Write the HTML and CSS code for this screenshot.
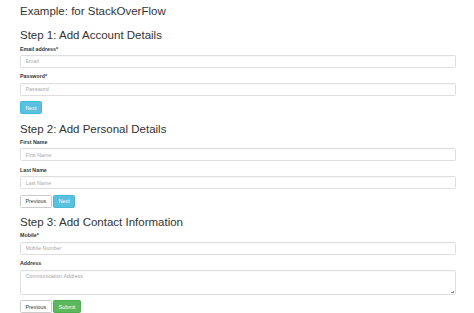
FILE: index.html
```html
<!DOCTYPE html>
<html lang="en">
<head>
  <meta charset="UTF-8">
  <title>Example: for StackOverFlow</title>
  <link rel="stylesheet" href="styles.css">
</head>
<body>
  <div class="container">
    <h2 class="title">Example: for StackOverFlow</h2>

    <!-- Passo 1 -->
    <form class="step">
      <h2>Step 1: Add Account Details</h2>
      <div class="form-group">
        <label>Email address*</label>
        <input type="email" class="form-control" placeholder="Email">
      </div>
      <div class="form-group">
        <label>Password*</label>
        <input type="password" class="form-control" placeholder="Password">
      </div>
      <div class="actions">
        <button type="button" class="btn btn-info">Next</button>
      </div>
    </form>

    <!-- Passo 2 -->
    <form class="step">
      <h2>Step 2: Add Personal Details</h2>
      <div class="form-group">
        <label>First Name</label>
        <input type="text" class="form-control" placeholder="First Name">
      </div>
      <div class="form-group">
        <label>Last Name</label>
        <input type="text" class="form-control" placeholder="Last Name">
      </div>
      <div class="actions">
        <button type="button" class="btn btn-default">Previous</button>
        <button type="button" class="btn btn-info">Next</button>
      </div>
    </form>

    <!-- Passo 3 -->
    <form class="step">
      <h2>Step 3: Add Contact Information</h2>
      <div class="form-group">
        <label>Mobile*</label>
        <input type="text" class="form-control" placeholder="Mobile Number">
      </div>
      <div class="form-group">
        <label>Address</label>
        <textarea class="form-control area" placeholder="Communication Address"></textarea>
      </div>
      <div class="actions">
        <button type="button" class="btn btn-default">Previous</button>
        <button type="button" class="btn btn-success">Submit</button>
      </div>
    </form>
  </div>
</body>
</html>
```

FILE: styles.css
```css
body {
  margin: 0;
  font-family: 'Liberation Sans', Arial, sans-serif;
  font-size: 5.3px;
  line-height: 1.42857;
  color: #333;
  background: #fff;
}

/* flex para as margens não colapsarem */
.container {
  display: flex;
  flex-direction: column;
  padding: 0 18.5px 0 20px;
}

.step {
  display: flex;
  flex-direction: column;
  margin: 0;
}

h2 {
  font-size: 11.5px;
  font-weight: 500;
  line-height: 1.1;
  margin: 8.3px 0 3.78px;
}

.title {
  margin-top: 5.2px;
}

.step:first-of-type h2 {
  margin-top: 7.56px;
}

.form-group {
  margin-bottom: 5.67px;
}

label {
  display: block;
  font-weight: bold;
  margin-bottom: 1.89px;
  height: 7.56px;
}

.form-control {
  display: block;
  box-sizing: border-box;
  width: 100%;
  height: 12.85px;
  padding: 2.27px 4.5px;
  font-family: inherit;
  font-size: 5.3px;
  color: #555;
  background: #fff;
  border: 1px solid #dedede;
  border-radius: 1.5px;
  box-shadow: inset 0 0.4px 0.4px rgba(0, 0, 0, 0.05);
  outline: none;
}

.form-control::placeholder {
  color: #a8a8a8;
}

.area {
  height: 25px;
  resize: none;
  background:
    linear-gradient(135deg, transparent 50%, #888 50%) right 1px bottom 1px / 3px 3px no-repeat,
    #fff;
}

.actions {
  display: flex;
  gap: 1.6px;
  height: 12.85px;
}

.btn {
  box-sizing: border-box;
  height: 12.85px;
  padding: 0 4.54px;
  font-family: inherit;
  font-size: 5.3px;
  border: 0.6px solid transparent;
  border-radius: 1.5px;
  cursor: pointer;
}

.btn-info {
  color: #fff;
  background: #5bc0de;
  border-color: #46b8da;
}

.btn-default {
  color: #333;
  background: #fff;
  border-color: #ccc;
}

.btn-success {
  color: #fff;
  background: #5cb85c;
  border-color: #4cae4c;
}
```
